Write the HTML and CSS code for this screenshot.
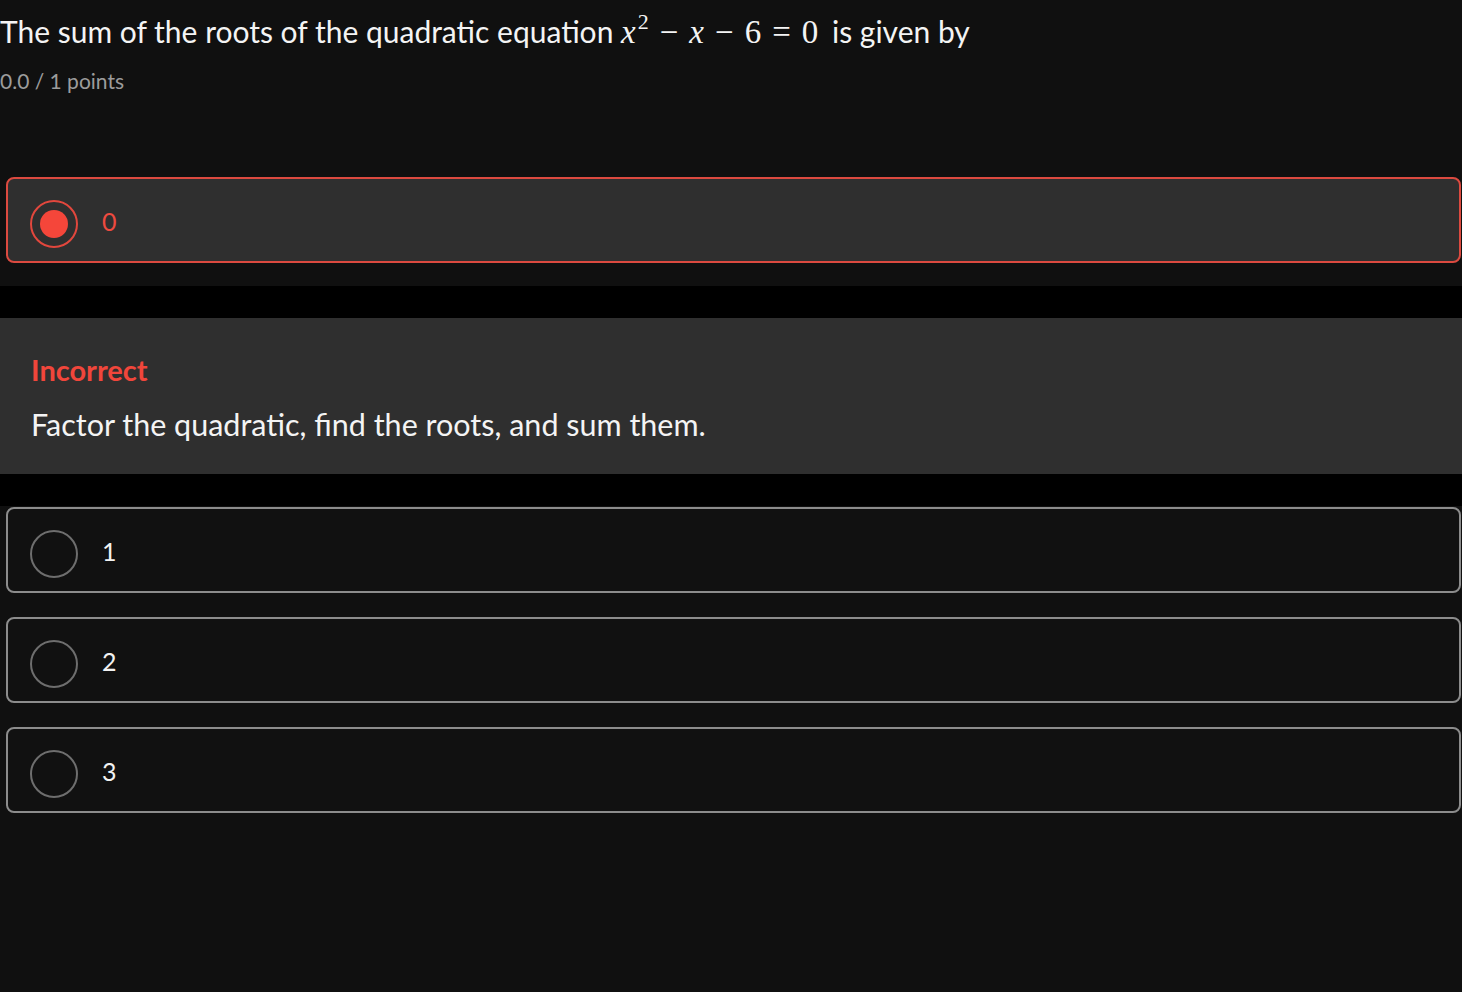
FILE: index.html
```html
<!DOCTYPE html>
<html>
<head>
<meta charset="utf-8">
<link rel="stylesheet" href="styles.css">
</head>
<body>
<div class="question">
  <h1 class="title">The sum of the roots of the quadratic equation <span class="math"><i>x</i><sup>2</sup><span class="op">−</span><i>x</i><span class="op">−</span>6<span class="op">=</span>0</span> is given by</h1>
  <div class="points">0.0 / 1 points</div>

  <div class="option selected">
    <span class="radio"><span class="dot"></span></span>
    <span class="label">0</span>
  </div>

  <div class="feedback-wrap">
    <div class="feedback">
      <div class="verdict">Incorrect</div>
      <div class="explain">Factor the quadratic, find the roots, and sum them.</div>
    </div>
  </div>

  <div class="option first">
    <span class="radio"></span>
    <span class="label">1</span>
  </div>
  <div class="option">
    <span class="radio"></span>
    <span class="label">2</span>
  </div>
  <div class="option">
    <span class="radio"></span>
    <span class="label">3</span>
  </div>
</div>
</body>
</html>
```
FILE: styles.css
```css
html, body {
  margin: 0;
  padding: 0;
  background: #101010;
}
body {
  font-family: Lato, "Noto Sans", sans-serif;
  color: #f2f2f2;
}
.question {
  display: flex;
  flex-direction: column;
}
.title {
  margin: 0;
  padding-top: 11px;
  font-size: 30px;
  font-weight: 400;
  line-height: 40px;
  color: #f4f4f4;
  white-space: nowrap;
}
.math {
  font-family: "Liberation Serif", "DejaVu Serif", serif;
  font-size: 33px;
  margin-right: 6px;
}
.math i {
  font-style: italic;
}
.math sup {
  font-size: 22px;
  vertical-align: 0;
  position: relative;
  top: -14px;
  margin-left: 2px;
}
.op {
  margin: 0 11px;
}
.points {
  margin-top: 10px;
  font-size: 21px;
  line-height: 30px;
  color: #9c9c9c;
}
.option {
  box-sizing: border-box;
  height: 86px;
  margin: 0 1px 24px 6px;
  border: 2px solid #8c8c8c;
  border-radius: 8px;
  background: #111111;
  display: flex;
  align-items: flex-start;
  padding: 21px 22px 0 22px;
  gap: 24px;
}
.option.selected {
  margin-top: 81px;
  margin-bottom: 23px;
  border-color: #dc4a40;
  background: #2f2f2f;
}
.option.first {
  margin-top: 1px;
}
.radio {
  box-sizing: border-box;
  width: 48px;
  height: 48px;
  border: 2px solid #6e6e6e;
  border-radius: 50%;
  display: flex;
  align-items: center;
  justify-content: center;
  flex: none;
}
.selected .radio {
  border-color: #e2473d;
}
.dot {
  width: 28px;
  height: 28px;
  border-radius: 50%;
  background: #f5463a;
}
.label {
  font-size: 25px;
  line-height: 42px;
  color: #f2f2f2;
}
.selected .label {
  color: #ee4a3f;
}
.feedback-wrap {
  background: #000000;
  padding: 32px 0;
}
.feedback {
  background: #2f2f2f;
  padding: 35px 31px 30px;
}
.verdict {
  font-size: 29px;
  font-weight: 700;
  line-height: 34px;
  color: #f1463b;
}
.explain {
  margin-top: 17px;
  font-size: 30.5px;
  line-height: 40px;
  color: #f4f4f4;
}
```
